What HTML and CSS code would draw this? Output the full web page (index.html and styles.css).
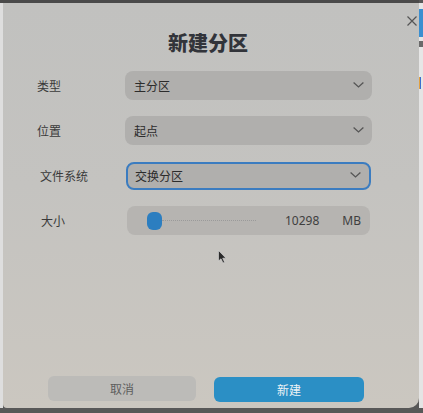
FILE: index.html
```html
<!DOCTYPE html>
<html lang="zh-CN">
<head>
<meta charset="utf-8">
<title>新建分区</title>
<link rel="stylesheet" href="styles.css">
</head>
<body>
<div class="screen">
  <div class="top-band"></div>
  <div class="middle">
    <div class="left-strip"></div>
    <div class="dialog">
      <button class="close" aria-label="关闭">
        <svg width="10" height="10" viewBox="0 0 10 10"><path d="M0.5 0.5 L9.5 9.5 M9.5 0.5 L0.5 9.5" stroke="#555" stroke-width="1.2" fill="none"/></svg>
      </button>
      <h1 class="title">新建分区</h1>
      <div class="form">
        <div class="row">
          <span class="label">类型</span>
          <div class="combo"><span class="combo-text">主分区</span>
            <svg class="chev" width="11" height="6" viewBox="0 0 11 6"><path d="M0.6 0.6 L5.5 5 L10.4 0.6" stroke="#555" stroke-width="1.3" fill="none"/></svg>
          </div>
        </div>
        <div class="row">
          <span class="label">位置</span>
          <div class="combo"><span class="combo-text">起点</span>
            <svg class="chev" width="11" height="6" viewBox="0 0 11 6"><path d="M0.6 0.6 L5.5 5 L10.4 0.6" stroke="#555" stroke-width="1.3" fill="none"/></svg>
          </div>
        </div>
        <div class="row">
          <span class="label label-shift">文件系统</span>
          <div class="combo combo-focus"><span class="combo-text">交换分区</span>
            <svg class="chev" width="11" height="6" viewBox="0 0 11 6"><path d="M0.6 0.6 L5.5 5 L10.4 0.6" stroke="#555" stroke-width="1.3" fill="none"/></svg>
          </div>
        </div>
        <div class="row">
          <span class="label label-shift2">大小</span>
          <div class="slider-box">
            <div class="handle"></div>
            <div class="track"></div>
            <span class="value">10298</span>
            <span class="unit">MB</span>
          </div>
        </div>
      </div>
      <div class="actions">
        <button class="btn btn-cancel">取消</button>
        <button class="btn btn-ok">新建</button>
      </div>
      <svg class="cursor" width="9" height="14" viewBox="0 0 9 14"><path d="M0.5 0.5 L0.5 11 L3 8.8 L5 13 L6.6 12.2 L4.7 8.2 L8 8.2 Z" fill="#2a2a2a" stroke="#ddd" stroke-width="0.6"/></svg>
    </div>
    <div class="right-strip">
      <div class="rs-light1"></div>
      <div class="rs-blue"></div>
      <div class="rs-light2"></div>
      <div class="rs-dark"></div>
      <div class="rs-light3"></div>
      <div class="rs-mark"></div>
      <div class="rs-light4"></div>
    </div>
  </div>
  <div class="bottom-band"></div>
</div>
</body>
</html>
```

FILE: styles.css
```css
* { box-sizing: border-box; }
html, body { margin: 0; padding: 0; }
body {
  width: 423px;
  height: 413px;
  overflow: hidden;
  background: #555;
  font-family: "Noto Sans CJK SC", "Noto Sans", sans-serif;
}
.screen {
  width: 423px;
  height: 413px;
  display: flex;
  flex-direction: column;
  background: #575757;
}
.top-band {
  height: 3px;
  width: 419px;
  background: #4a4a4a;
}
.middle {
  display: flex;
  height: 405px;
}
.left-strip {
  width: 3px;
  background: #dedede;
}
.dialog {
  position: relative;
  width: 416px;
  height: 405px;
  background: linear-gradient(180deg, #c1c1bf 0%, #c4c3c0 45%, #cbc7c0 100%);
  border-radius: 0 0 10px 4px;
  display: flex;
  flex-direction: column;
  padding-top: 26px;
  padding-bottom: 6px;
}
.close {
  position: absolute;
  top: 13px;
  right: 2px;
  width: 10px;
  height: 10px;
  padding: 0;
  border: 0;
  background: transparent;
  display: flex;
}
.title {
  margin: 0;
  text-align: center;
  font-size: 20px;
  line-height: 28px;
  font-weight: 900;
  color: #32343a;
  padding-right: 6px;
}
.form {
  margin-top: 14px;
  display: flex;
  flex-direction: column;
  gap: 16px;
}
.row {
  display: flex;
  align-items: center;
  height: 29px;
  padding-left: 34px;
}
.label {
  width: 88px;
  font-size: 12px;
  color: #3a3a3a;
}
.label-shift { padding-left: 3px; }
.label-shift2 { padding-left: 4px; }
.combo {
  width: 247px;
  height: 29px;
  border-radius: 8px;
  background: #b0afad;
  display: flex;
  align-items: center;
  justify-content: space-between;
  padding: 0 8px 0 9px;
}
.combo-focus {
  border: 2px solid #3b7cc0;
  padding: 0 8px 0 7px;
  width: 245px;
  margin-left: 1px;
  height: 28px;
}
.combo-text {
  font-size: 12px;
  color: #2c2c2c;
}
.chev { display: block; margin-top: -2px; }
.slider-box {
  width: 243px;
  height: 29px;
  margin-left: 2px;
  border-radius: 8px;
  background: #b6b4b1;
  display: flex;
  align-items: center;
  padding-left: 20px;
  padding-right: 9px;
}
.handle {
  width: 15px;
  height: 18px;
  border-radius: 6px;
  background: #2c7ec0;
}
.track {
  width: 94px;
  height: 0;
  border-top: 1px dotted #9a9a9a;
}
.value {
  margin-left: 29px;
  font-size: 12px;
  color: #3f3f3f;
  font-family: "Noto Sans", sans-serif;
}
.unit {
  margin-left: auto;
  font-size: 12px;
  color: #3f3f3f;
  font-family: "Noto Sans", sans-serif;
}
.actions {
  margin-top: auto;
  display: flex;
  gap: 18px;
  padding-left: 45px;
  align-items: flex-start;
}
.btn {
  height: 25px;
  border: 0;
  border-radius: 6px;
  font-family: "Noto Sans CJK SC", sans-serif;
  font-size: 12px;
  padding: 0;
}
.btn-cancel {
  width: 148px;
  background: #bcbbb8;
  color: #5e5e5e;
}
.btn-ok {
  width: 150px;
  margin-top: 1px;
  background: #2b8fc5;
  color: #eef3f6;
}
.cursor {
  position: absolute;
  left: 215px;
  top: 247px;
}
.right-strip {
  width: 4px;
  display: flex;
  flex-direction: column;
  background: #e4e4e4;
}
.rs-light1 { height: 6px; background: #e6e6e6; }
.rs-blue { height: 28px; background: #3b8fd0; }
.rs-light2 { height: 4px; background: #e6e6e6; }
.rs-dark { height: 6px; background: #6a6a6a; }
.rs-light3 { height: 30px; background: #e6e6e6; }
.rs-mark { height: 12px; background: linear-gradient(90deg, #e2a040 0 1px, #3b6fd0 1px 2px, #e6e6e6 2px); }
.rs-light4 { flex: 1; background: #e4e4e4; }
.bottom-band {
  height: 5px;
  background: #585858;
}
```
